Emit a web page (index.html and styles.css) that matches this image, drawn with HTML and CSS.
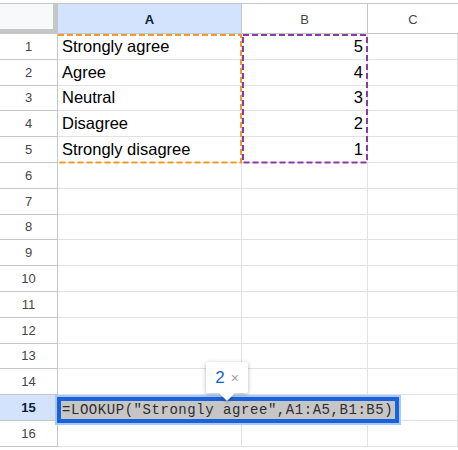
FILE: index.html
```html
<!DOCTYPE html>
<html>
<head>
<meta charset="utf-8">
<link rel="stylesheet" href="styles.css">
</head>
<body>
<div class="grid">
  <div class="corner"></div>
  <div class="colh sel">A</div>
  <div class="colh">B</div>
  <div class="colh last">C</div>

  <div class="rowh">1</div><div class="cell">Strongly agree</div><div class="cell num">5</div><div class="cell"></div>
  <div class="rowh">2</div><div class="cell">Agree</div><div class="cell num">4</div><div class="cell"></div>
  <div class="rowh">3</div><div class="cell">Neutral</div><div class="cell num">3</div><div class="cell"></div>
  <div class="rowh">4</div><div class="cell">Disagree</div><div class="cell num">2</div><div class="cell"></div>
  <div class="rowh">5</div><div class="cell">Strongly disagree</div><div class="cell num">1</div><div class="cell"></div>
  <div class="rowh">6</div><div class="cell"></div><div class="cell"></div><div class="cell"></div>
  <div class="rowh">7</div><div class="cell"></div><div class="cell"></div><div class="cell"></div>
  <div class="rowh">8</div><div class="cell"></div><div class="cell"></div><div class="cell"></div>
  <div class="rowh">9</div><div class="cell"></div><div class="cell"></div><div class="cell"></div>
  <div class="rowh">10</div><div class="cell"></div><div class="cell"></div><div class="cell"></div>
  <div class="rowh">11</div><div class="cell"></div><div class="cell"></div><div class="cell"></div>
  <div class="rowh">12</div><div class="cell"></div><div class="cell"></div><div class="cell"></div>
  <div class="rowh">13</div><div class="cell"></div><div class="cell"></div><div class="cell"></div>
  <div class="rowh">14</div><div class="cell"></div><div class="cell"></div><div class="cell"></div>
  <div class="rowh sel">15</div><div class="cell"></div><div class="cell"></div><div class="cell"></div>
  <div class="rowh">16</div><div class="cell"></div><div class="cell"></div><div class="cell"></div>

  <svg class="marks" width="458" height="200" viewBox="0 0 458 200">
    <path d="M58 32 H241 V159.5 H58" fill="none" stroke="#f39a2b" stroke-width="2" stroke-dasharray="6 3"/>
    <rect x="243" y="32" width="124" height="127.5" fill="none" stroke="#8a3aa3" stroke-width="2" stroke-dasharray="6 3"/>
  </svg>

  <div class="editor"><span class="formula">=LOOKUP("Strongly agree",A1:A5,B1:B5)</span></div>

  <div class="tip"><span class="tip-num">2</span><span class="tip-x">×</span></div>
</div>
</body>
</html>
```
FILE: styles.css
```css
html, body {
  margin: 0;
  padding: 0;
  background: #ffffff;
}
body {
  padding-top: 3px;
  width: 458px;
  height: 447px;
  overflow: hidden;
  font-family: "Liberation Sans", Arial, sans-serif;
}
.grid {
  position: relative;
  display: grid;
  grid-template-columns: 58px 184px 126px 90px;
  grid-template-rows: 31px repeat(16, 25.8px);
}
.grid > div {
  box-sizing: border-box;
}
.corner {
  background: #f8f9fa;
  border-top: 1px solid #c4c7c5;
  border-right: 5px solid #c4c7c5;
  border-bottom: 5px solid #c4c7c5;
}
.colh {
  display: flex;
  align-items: center;
  justify-content: center;
  border-top: 1px solid #c4c7c5;
  border-right: 1px solid #c4c7c5;
  border-bottom: 1px solid #c4c7c5;
  color: #444746;
  font-size: 13px;
  padding-top: 1px;
}
.colh.last {
  border-right: none;
}
.colh.sel {
  background: #d3e3fd;
  color: #0b1d3a;
  font-weight: bold;
}
.rowh {
  display: flex;
  align-items: center;
  justify-content: center;
  border-right: 1px solid #c4c7c5;
  border-bottom: 1px solid #c4c7c5;
  color: #444746;
  font-size: 13px;
}
.rowh.sel {
  background: #d3e3fd;
  color: #0b1d3a;
  font-weight: bold;
}
.cell {
  display: flex;
  align-items: center;
  padding: 0 4px;
  border-right: 1px solid #e1e1e1;
  border-bottom: 1px solid #e1e1e1;
  font-size: 16.5px;
  color: #000000;
  white-space: nowrap;
  overflow: hidden;
}
.cell.num {
  justify-content: flex-end;
}
.marks {
  position: absolute;
  left: 0;
  top: 0;
  pointer-events: none;
}
.editor {
  position: absolute;
  left: 57px;
  top: 394px;
  width: 342px;
  height: 26px;
  box-sizing: border-box;
  border: 4px solid #1a62d8;
  box-shadow: 0 0 0 2px #a8c7fa;
  background: #c6c6c6;
  display: flex;
  align-items: center;
  overflow: hidden;
}
.formula {
  font-family: "Liberation Mono", "DejaVu Sans Mono", monospace;
  font-size: 14px;
  letter-spacing: 0.55px;
  line-height: 18px;
  color: #2e2e2e;
  padding-left: 1px;
  white-space: nowrap;
}
.tip {
  position: absolute;
  left: 206px;
  top: 359px;
  width: 42px;
  height: 31px;
  box-sizing: border-box;
  background: #ffffff;
  border-radius: 2px;
  box-shadow: 0 1px 4px rgba(0, 0, 0, 0.3);
  display: flex;
  align-items: center;
  justify-content: center;
  gap: 6px;
  font-family: "Liberation Sans", Arial, sans-serif;
}
.tip::after {
  content: "";
  position: absolute;
  left: 16px;
  bottom: -6px;
  width: 10px;
  height: 10px;
  background: #ffffff;
  transform: rotate(45deg);
  box-shadow: 2px 2px 2px rgba(0, 0, 0, 0.15);
}
.tip-num {
  color: #1a62d8;
  font-size: 17px;
  position: relative;
  z-index: 1;
}
.tip-x {
  color: #a0a0a0;
  font-size: 14px;
  position: relative;
  z-index: 1;
}
```
